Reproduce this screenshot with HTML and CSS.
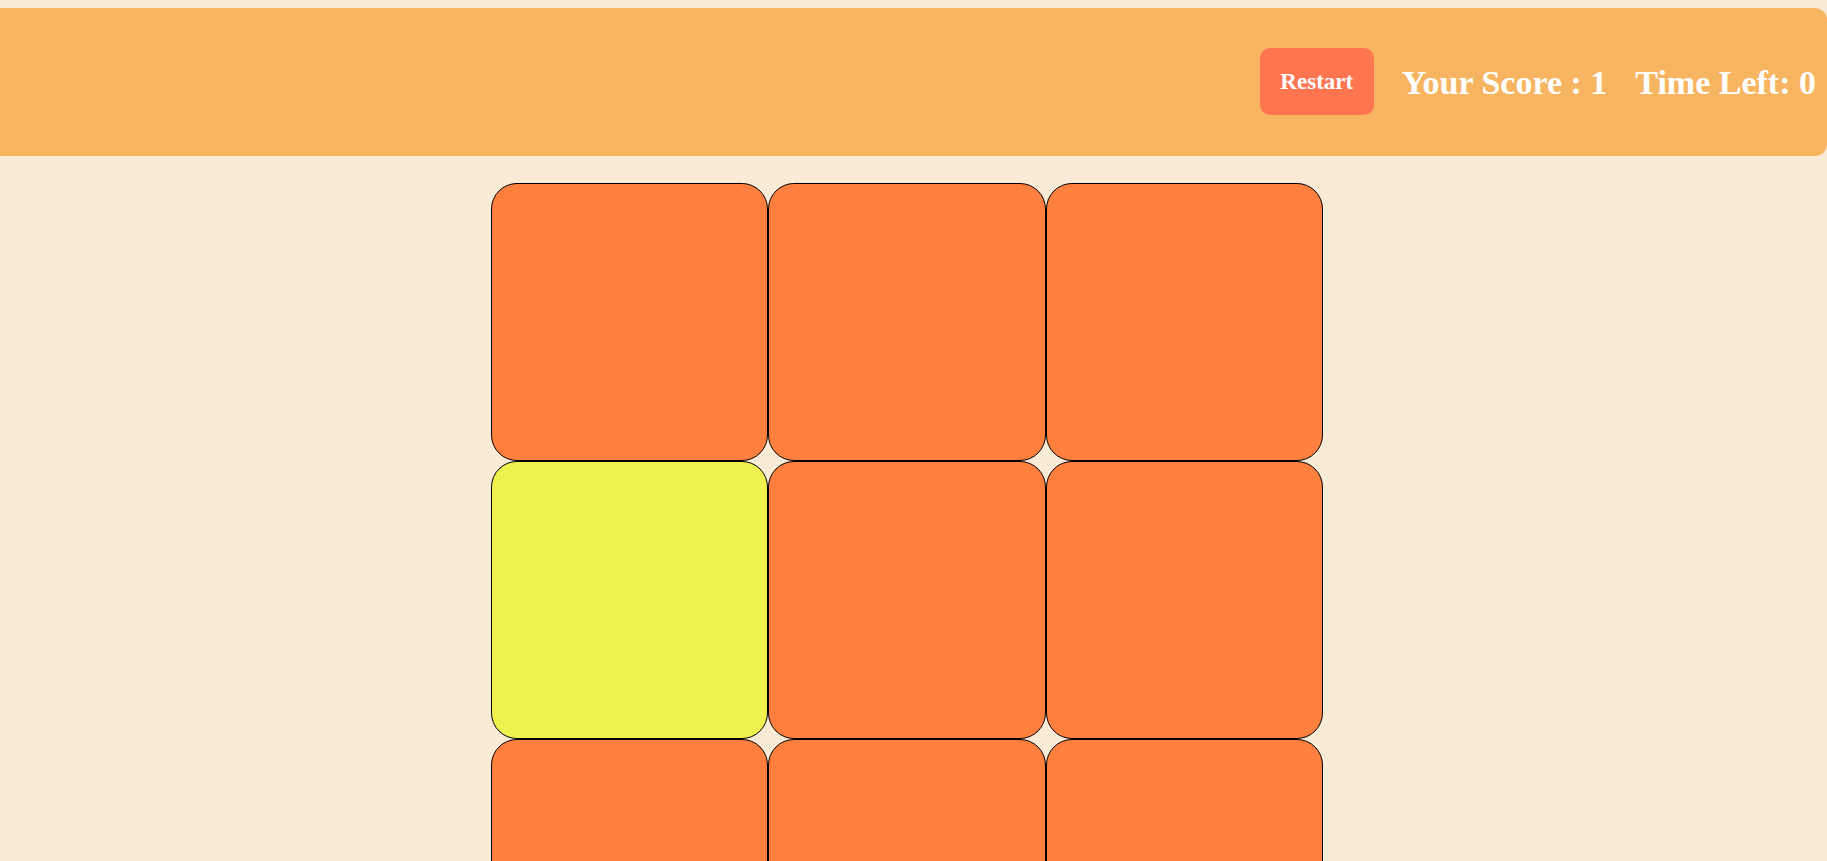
FILE: index.html
```html
<!DOCTYPE html>
<html lang="en">
<head>
<meta charset="utf-8">
<title>Whack Game</title>
<link rel="stylesheet" href="styles.css">
</head>
<body>
<header class="topbar">
  <button class="restart" type="button">Restart</button>
  <span class="stat">Your Score : 1</span>
  <span class="stat">Time Left: 0</span>
</header>
<main class="stage">
  <div class="board">
    <div class="tile"></div>
    <div class="tile"></div>
    <div class="tile"></div>
    <div class="tile tile-lit"></div>
    <div class="tile"></div>
    <div class="tile"></div>
    <div class="tile"></div>
    <div class="tile"></div>
    <div class="tile"></div>
  </div>
</main>
</body>
</html>
```

FILE: styles.css
```css
html {
  scrollbar-width: none;
}
html::-webkit-scrollbar {
  display: none;
}
body {
  margin: 8px 0 0 0;
  background: #faebd7;
  font-family: "Liberation Serif", "Times New Roman", serif;
}
.topbar {
  height: 148px;
  background: #f7b562;
  border-radius: 0 12px 12px 0;
  display: flex;
  align-items: center;
  justify-content: flex-end;
  gap: 28px;
  padding-right: 11px;
  box-sizing: border-box;
}
.restart {
  width: 114px;
  height: 67px;
  border: none;
  border-radius: 10px;
  background: #ff7550;
  color: #fff;
  font-family: "Liberation Serif", "Times New Roman", serif;
  font-weight: bold;
  font-size: 23px;
  padding: 0;
  margin-top: -1px;
}
.stat {
  color: #fff;
  font-weight: bold;
  font-size: 34px;
  margin-top: 2px;
}
.stage {
  display: flex;
  justify-content: center;
  padding-right: 13px;
  padding-top: 27px;
}
.board {
  width: 832px;
  display: grid;
  grid-template-columns: repeat(3, 1fr);
  grid-auto-rows: 278px;
}
.tile {
  background: #ff803e;
  border: 1px solid #000;
  border-radius: 26px;
}
.tile-lit {
  background: #eff24e;
}
```
